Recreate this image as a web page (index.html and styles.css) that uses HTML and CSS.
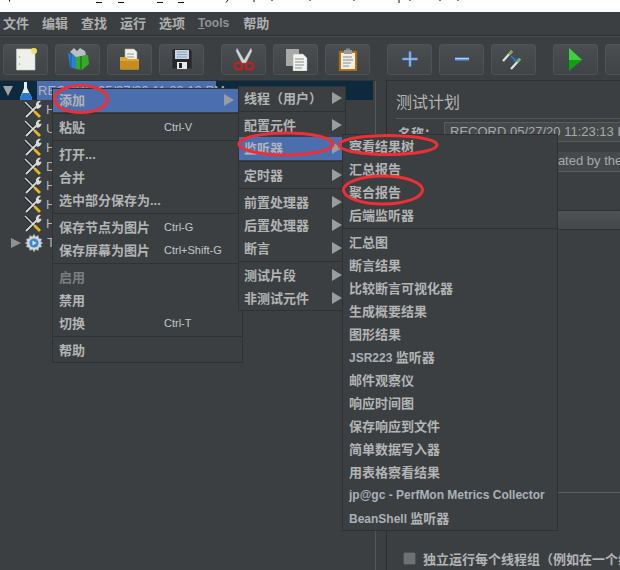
FILE: index.html
```html
<!DOCTYPE html>
<html lang="zh">
<head>
<meta charset="utf-8">
<title>JMeter</title>
<link rel="stylesheet" href="styles.css">
</head>
<body>
<div class="app">
  <div class="topstrip">
    <svg class="topmarks" width="620" height="12" viewBox="0 0 620 12">
      <path d="M9.5 0v1.5M96 2.5h6M118 2.5h6M157 2.5h6M178 2.5h6M226 2.5l2-2.5M254 0v2M272 0v1M310 0v1M354 0v1M399 0v3M410 0v1M440 0v1M458 0v1" stroke="#111" stroke-width="1" fill="none"/>
    </svg>
  </div>
  <nav class="menubar">
    <span>文件</span><span>编辑</span><span>查找</span><span>运行</span><span>选项</span><span class="tools"><u>T</u>ools</span><span>帮助</span>
  </nav>
  <div class="toolbar">
    <button class="tb"><svg width="24" height="24" viewBox="0 0 24 24"><path d="M2.500 2h17l1.500 2v19H2.500z" fill="#eef0ea" stroke="#c9c9c0" stroke-width=".6"/><circle cx="20" cy="4" r="3" fill="#f2e26a"/><circle cx="5.500" cy="10" r=".7" fill="#999"/><circle cx="5.500" cy="17" r=".7" fill="#999"/></svg></button>
    <button class="tb"><svg width="24" height="24" viewBox="0 0 24 24"><path d="M2 6l8 3v13l-6-2z" fill="#2c7fd0"/><path d="M10 9l12-1 1 9-7 6-6-1z" fill="#36a82c"/><path d="M4 5l4-4 3 3 3-3 5 3 1 4-10 2z" fill="#b9c0c4"/><path d="M15 9v14" stroke="#1c7a18" stroke-width="1.500"/><path d="M5 7v13" stroke="#1b5aa0" stroke-width="1"/></svg></button>
    <button class="tb"><svg width="24" height="24" viewBox="0 0 24 24"><path d="M7 2h9l3 3v9H7z" fill="#f0f0ea" stroke="#aaa" stroke-width=".6"/><path d="M9 7h7M9 10h7" stroke="#999" stroke-width="1"/><path d="M2 10h6l2 2h11v9a1.500 1.500 0 0 1-1.500 1.500h-16A1.500 1.500 0 0 1 2 21z" fill="#d9a43a"/><path d="M2 14h19v8.500H3.500A1.500 1.500 0 0 1 2 21z" fill="#c98c1e"/></svg></button>
    <button class="tb"><svg width="24" height="24" viewBox="0 0 24 24"><path d="M2 2h18l2 2v18H2z" fill="#26282a" stroke="#555" stroke-width=".5"/><path d="M5 3h14v9H5z" fill="#c9d4e4"/><path d="M7 5h10M7 7.500h10M7 10h10" stroke="#7f97b8" stroke-width=".8"/><path d="M7 15h10v7H7z" fill="#e8e8e8"/><path d="M9 16h3v5H9z" fill="#222"/></svg></button>
    <button class="tb tb-gap"><svg width="24" height="24" viewBox="0 0 24 24"><path d="M5 1l7 12 7-12 1 3-6 12h-4L4 4z" fill="#d4d6d8" stroke="#8b8f92" stroke-width=".5"/><ellipse cx="6.500" cy="19" rx="3.800" ry="3.300" fill="none" stroke="#c81e1e" stroke-width="2.200"/><ellipse cx="17.500" cy="19" rx="3.800" ry="3.300" fill="none" stroke="#c81e1e" stroke-width="2.200"/></svg></button>
    <button class="tb"><svg width="24" height="24" viewBox="0 0 24 24"><path d="M2 2h13v17H2z" fill="#a9a9a9"/><path d="M9 7h10l4 4v13H9z" fill="#f2f2f0" stroke="#aaa" stroke-width=".5"/><path d="M11 12h9M11 15h9M11 18h9M11 21h7" stroke="#8a8a8a" stroke-width="1"/></svg></button>
    <button class="tb"><svg width="24" height="24" viewBox="0 0 24 24"><path d="M3 4h18v20H3z" fill="#bb7412" stroke="#8a5510" stroke-width=".5"/><path d="M5 6h14v16H5z" fill="#f0efe7"/><path d="M8 3h8v4H8z" fill="#9b9b9b"/><path d="M10 1.500h4v2h-4z" fill="#8a8a8a"/><path d="M7 10h9M7 13h10M7 16h8M7 19h6" stroke="#8a8a8a" stroke-width="1"/></svg></button>
    <button class="tb tb-gap"><svg width="24" height="24" viewBox="0 0 24 24"><path d="M12 4.500v15M4.500 12h15" stroke="#5f9be6" stroke-width="2.600"/><path d="M12 4.500v15M4.500 12h15" stroke="#a9cdf5" stroke-width=".8"/></svg></button>
    <button class="tb"><svg width="24" height="24" viewBox="0 0 24 24"><path d="M5 12h14" stroke="#5f9be6" stroke-width="3"/><path d="M5 11.500h14" stroke="#b4d4f7" stroke-width="1"/></svg></button>
    <button class="tb"><svg width="24" height="24" viewBox="0 0 24 24"><path d="M1 14L10 4" stroke="#dfe3dc" stroke-width="2.200"/><path d="M7 7.500l3-3.500" stroke="#74b35e" stroke-width="2.500"/><path d="M9 22l9-10" stroke="#dfe3dc" stroke-width="2.200"/><path d="M15 15l3-3.500" stroke="#74b35e" stroke-width="2.500"/><path d="M9 9l5 5" stroke="#2e78d8" stroke-width="1.400"/><path d="M11 14.500h3.500V11z" fill="#2e78d8"/></svg></button>
    <button class="tb tb-gap"><svg width="24" height="24" viewBox="0 0 24 24"><path d="M5 1l13 12L5 24z" fill="#12a012"/><path d="M5 1l13 12H5z" fill="#3fd03f"/></svg></button>
    <button class="tb"></button>
  </div>
  <div class="main">
    <aside class="tree">
      <div class="node root">
        <i class="tw open"></i>
        <svg class="ico flask" width="14" height="20" viewBox="0 0 14 20"><path d="M5 1h3v6l5 10a1.500 1.500 0 0 1-1 2H2a1.500 1.500 0 0 1-1-2l4-10z" fill="#e4ecf2"/><path d="M3.500 12h7l2.500 5a1.500 1.500 0 0 1-1 2H2a1.500 1.500 0 0 1-1-2z" fill="#2a76d2"/></svg>
        <span class="lbl sel">RECORD 05/27/20 11:23:13 PM</span>
      </div>
      <div class="node"><svg class="ico" width="20" height="19" viewBox="0 0 20 19"><use href="#wr"/></svg><span class="lbl">HTTP</span></div>
      <div class="node"><svg class="ico" width="20" height="19" viewBox="0 0 20 19"><use href="#wr"/></svg><span class="lbl">User</span></div>
      <div class="node"><svg class="ico" width="20" height="19" viewBox="0 0 20 19"><use href="#wr"/></svg><span class="lbl">HTTP</span></div>
      <div class="node"><svg class="ico" width="20" height="19" viewBox="0 0 20 19"><use href="#wr"/></svg><span class="lbl">DNS</span></div>
      <div class="node"><svg class="ico" width="20" height="19" viewBox="0 0 20 19"><use href="#wr"/></svg><span class="lbl">HTTP</span></div>
      <div class="node"><svg class="ico" width="20" height="19" viewBox="0 0 20 19"><use href="#wr"/></svg><span class="lbl">HTTP</span></div>
      <div class="node"><svg class="ico" width="20" height="19" viewBox="0 0 20 19"><use href="#wr"/></svg><span class="lbl">HTTP</span></div>
      <div class="node thread">
        <i class="tw closed"></i>
        <svg class="ico" width="20" height="20" viewBox="0 0 20 20"><path d="M10 1l1.500 2.500 2.800-1 .6 2.900 2.900.6-1 2.800L19 10l-2.200 1.200 1 2.800-2.900.6-.6 2.900-2.800-1L10 19l-1.500-2.500-2.800 1-.6-2.900-2.900-.6 1-2.800L1 10l2.200-1.200-1-2.800 2.900-.6.6-2.900 2.800 1z" fill="#d3d6d8" stroke="#85898c" stroke-width=".5"/><circle cx="10" cy="10" r="4.600" fill="#3f86d8"/><path d="M8.500 7.500l4 2.500-4 2.500z" fill="#d6e6f8"/></svg>
        <span class="lbl">Thread</span>
      </div>
    </aside>
    <section class="panel">
      <h1 class="title">测试计划</h1>
      <div class="fieldrow"><label class="flabel">名称：</label><div class="field">RECORD 05/27/20 11:23:13 PM</div></div>
      <div class="fieldrow comment"><label class="flabel">注释：</label><div class="field commentfield">Test plan generated by the</div></div>
      <div class="band"></div>
      <div class="rule"></div>
      <label class="check"><i class="box"></i><span>独立运行每个线程组（例如在一个线</span></label>
    </section>
  </div>

  <ul class="menu m1">
    <li class="on has"><span class="t">添加</span></li>
    <li class="sep"></li>
    <li><span class="t">粘贴</span><span class="k">Ctrl-V</span></li>
    <li class="sep"></li>
    <li><span class="t">打开...</span></li>
    <li><span class="t">合并</span></li>
    <li><span class="t">选中部分保存为...</span></li>
    <li class="sep"></li>
    <li><span class="t">保存节点为图片</span><span class="k">Ctrl-G</span></li>
    <li><span class="t">保存屏幕为图片</span><span class="k">Ctrl+Shift-G</span></li>
    <li class="sep"></li>
    <li class="off"><span class="t">启用</span></li>
    <li><span class="t">禁用</span></li>
    <li><span class="t">切换</span><span class="k">Ctrl-T</span></li>
    <li class="sep"></li>
    <li><span class="t">帮助</span></li>
  </ul>
  <ul class="menu m2">
    <li class="has"><span class="t">线程（用户）</span></li>
    <li class="sep"></li>
    <li class="has"><span class="t">配置元件</span></li>
    <li class="has on"><span class="t">监听器</span></li>
    <li class="sep"></li>
    <li class="has"><span class="t">定时器</span></li>
    <li class="sep"></li>
    <li class="has"><span class="t">前置处理器</span></li>
    <li class="has"><span class="t">后置处理器</span></li>
    <li class="has"><span class="t">断言</span></li>
    <li class="sep"></li>
    <li class="has"><span class="t">测试片段</span></li>
    <li class="has"><span class="t">非测试元件</span></li>
  </ul>
  <ul class="menu m3">
    <li><span class="t">察看结果树</span></li>
    <li><span class="t">汇总报告</span></li>
    <li><span class="t">聚合报告</span></li>
    <li><span class="t">后端监听器</span></li>
    <li class="sep"></li>
    <li><span class="t">汇总图</span></li>
    <li><span class="t">断言结果</span></li>
    <li><span class="t">比较断言可视化器</span></li>
    <li><span class="t">生成概要结果</span></li>
    <li><span class="t">图形结果</span></li>
    <li><span class="t"><span class="lat">JSR223 </span>监听器</span></li>
    <li><span class="t">邮件观察仪</span></li>
    <li><span class="t">响应时间图</span></li>
    <li><span class="t">保存响应到文件</span></li>
    <li><span class="t">简单数据写入器</span></li>
    <li><span class="t">用表格察看结果</span></li>
    <li><span class="t"><span class="lat">jp@gc - PerfMon Metrics Collector</span></span></li>
    <li><span class="t"><span class="lat">BeanShell </span>监听器</span></li>
  </ul>

  <svg class="rings" width="620" height="570" viewBox="0 0 620 570">
    <g fill="none" stroke="#ee2f36" stroke-width="3">
      <ellipse cx="81" cy="99" rx="26.500" ry="13.500"/>
      <ellipse cx="286" cy="144" rx="47" ry="11"/>
      <ellipse cx="388" cy="145" rx="49" ry="9.500"/>
      <ellipse cx="383" cy="190" rx="39.500" ry="14"/>
    </g>
  </svg>
  <svg class="defs" width="0" height="0">
    <defs>
      <g id="wr">
        <path d="M2 2l15 15" stroke="#1e2022" stroke-width="3.200"/>
        <path d="M3 17L15 5" stroke="#1e2022" stroke-width="3.200"/>
        <path d="M2 2l10 10" stroke="#c9ccce" stroke-width="1.600"/>
        <path d="M11.500 11.500l5.500 5.500" stroke="#e6b71e" stroke-width="3"/>
        <path d="M3 17L15 5" stroke="#d8dadc" stroke-width="1.800"/>
        <path d="M13 6a4 4 0 0 1 5-5l-2.500 2.500 1 1.500 2-.5a4 4 0 0 1-5 4z" fill="#d8dadc"/>
      </g>
    </defs>
  </svg>
</div>
</body>
</html>
```
FILE: styles.css
```css
* { box-sizing: border-box; }
html, body { margin: 0; padding: 0; }
body { width: 620px; height: 570px; overflow: hidden; background: #fff; }
.app {
  position: relative;
  width: 620px;
  height: 570px;
  overflow: hidden;
  display: flex;
  flex-direction: column;
  font-family: "Liberation Sans", "Noto Sans CJK SC", sans-serif;
  color: #b2b4b5;
}
.topstrip { height: 12px; flex: none; background: #fff; }
.topmarks { display: block; }
.menubar {
  height: 24px;
  flex: none;
  display: flex;
  align-items: center;
  gap: 13px;
  padding-left: 3px;
  padding-bottom: 2px;
  background: #3c3f41;
  border-bottom: 1px solid #2d2f30;
  font-size: 13px;
  font-weight: 700;
  color: #aeb0b1;
}
.tools { font-size: 12px; color: #8f9396; margin-right: 1px; }
.toolbar {
  height: 44px;
  flex: none;
  display: flex;
  align-items: center;
  gap: 7px;
  padding-left: 3px;
  padding-top: 1px;
  background: #3c3f41;
  border-top: 1px solid #4a4d4f;
}
.tb {
  width: 45px;
  height: 31px;
  flex: none;
  padding: 0;
  display: flex;
  align-items: center;
  justify-content: center;
  background: linear-gradient(#4b4e50, #414446);
  border: 1px solid #505356;
  border-radius: 3px;
}
.tb-gap { margin-left: 10px; }
.main { flex: 1; display: flex; min-height: 0; background: #3c3f41; }
.tree {
  width: 376px;
  flex: none;
  background: #3c3f41;
  border-right: 1px solid #55585a;
  border-top: 1px solid #2f3133;
}
.node {
  height: 19px;
  display: flex;
  align-items: center;
  padding-left: 23px;
  font-size: 13px;
}
.node .ico { flex: none; }
.node .lbl { margin-left: 3px; white-space: nowrap; }
.root { background: #0d293e; padding-left: 3px; margin-right: 2px; }
.root .flask { margin-left: 6px; }
.root .lbl.sel { margin-left: 4px; width: 179px; height: 19px; line-height: 19px; background: #4b6eaf; padding-left: 1px; }
.thread { padding-left: 11px; }
.thread .ico { margin-left: 3px; }
.tw { display: block; flex: none; }
.tw.open { width: 0; height: 0; border-left: 5px solid transparent; border-right: 5px solid transparent; border-top: 10px solid #a0a4a6; }
.tw.closed { width: 0; height: 0; border-top: 5px solid transparent; border-bottom: 5px solid transparent; border-left: 10px solid #8f9294; }
.panel {
  flex: 1;
  margin-left: 10px;
  padding-left: 9px;
  background: #3c3f41;
  border-left: 1px solid #2b2d2e;
  border-top: 1px solid #2f3133;
  min-width: 0;
  display: flex;
  flex-direction: column;
}
.title { margin: 11px 0 0; height: 27px; font-size: 16px; font-weight: 400; line-height: 22px; color: #b2b4b5; border-bottom: 1px solid #55585a; }
.fieldrow { display: flex; align-items: center; margin-top: 3px; height: 20px; font-size: 13px; font-weight: 700; }
.flabel { width: 48px; flex: none; padding-left: 2px; }
.field { flex: 1; min-width: 0; height: 20px; white-space: nowrap; overflow: hidden; padding-left: 5px; line-height: 18px; font-size: 13px; font-weight: 400; background: #45494a; border: 1px solid #5a5d5f; border-right: none; color: #a6a9ab; }
.comment { margin-top: 10px; }
.commentfield { padding-left: 25px; border-top: none; border-left: none; }
.band { margin: 38px 0 0 -9px; height: 20px; background: linear-gradient(#4f5254, #45484a); border-top: 1px solid #2f3133; border-bottom: 1px solid #2f3133; }
.rule { margin: 262px 0 0 -9px; height: 1px; background: #5e6163; }
.check { display: flex; align-items: center; margin: 58px 0 0 7px; height: 14px; font-size: 13px; font-weight: 700; white-space: nowrap; }
.box { display: block; width: 13px; height: 13px; flex: none; margin-right: 7px; background: #6f7274; border: 1px solid #4e5153; border-radius: 2px; }

.menu {
  position: absolute;
  margin: 0;
  padding: 0;
  list-style: none;
  background: #3c3f41;
  border: 1px solid #2f3133;
  font-size: 13px;
  font-weight: 700;
  color: #b2b4b5;
}
.menu li { height: 23px; display: flex; align-items: center; padding: 0 0 2px 6px; position: relative; white-space: nowrap; }
.menu li.sep { height: 4px; padding: 0; background: linear-gradient(#3c3f41 0 1px, #2f3133 1px 2px, #3c3f41 2px); }
.menu li.on { background: #4b6eaf; }
.menu li.off { color: #7a7d7f; }
.menu .t { display: block; }
.menu .lat { font-size: 12px; color: #a9b1b8; }
.menu .k { position: absolute; left: 111px; font-size: 11px; font-weight: 400; color: #c4c7c9; }
.menu li.has::after {
  content: "";
  position: absolute;
  right: 3px;
  top: 5px;
  border-top: 6px solid transparent;
  border-bottom: 6px solid transparent;
  border-left: 10px solid #9a9d9f;
}
.m1 { left: 52px; top: 88px; width: 191px; height: 275px; }
.m1 li.has::after { right: 8px; }
.m2 { left: 238px; top: 86px; width: 108px; height: 225px; }
.m2 li { padding-left: 5px; }
.m3 { left: 342px; top: 134px; width: 216px; height: 397px; }
.rings { position: absolute; left: 0; top: 0; pointer-events: none; }
.defs { position: absolute; }
```
